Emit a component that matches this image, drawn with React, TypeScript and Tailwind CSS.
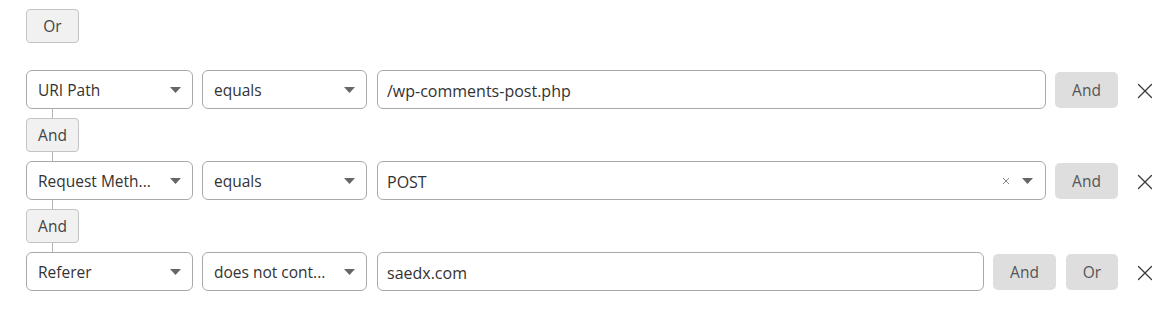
import React from "react";

const font = { fontFamily: '"Open Sans", "Noto Sans", sans-serif' };

function Caret() {
  return (
    <svg width="11" height="6" viewBox="0 0 11 6" className="shrink-0">
      <path d="M0 0 L11 0 L5.5 6 Z" fill="#666" />
    </svg>
  );
}

function XIcon() {
  return (
    <svg width="16" height="16" viewBox="0 0 16 16" className="shrink-0 mt-[2px]">
      <path d="M1.5 1.5 L14.5 14.5 M14.5 1.5 L1.5 14.5" stroke="#3a3a3a" strokeWidth="1.3" strokeLinecap="round" />
    </svg>
  );
}

function Select({ label, w }: { label: string; w: string }) {
  return (
    <div className={`${w} h-[39px] shrink-0 flex items-center justify-between pl-[11px] pr-[11px] border border-[#a9a9a9] rounded-[6px] bg-white text-[15.5px] text-[#333]`}>
      <span className="whitespace-nowrap pt-[2px]">{label}</span>
      <Caret />
    </div>
  );
}

function GrayBtn({ label, w }: { label: string; w: string }) {
  return (
    <div className={`${w} h-[36px] shrink-0 flex items-center justify-center rounded-[5px] bg-[#dedede] text-[15.5px] text-[#555]`}>
      <span className="pt-[2px]">{label}</span>
    </div>
  );
}

function Connector() {
  return (
    <div className="flex flex-col items-start">
      <div className="w-px h-[9px] bg-[#b5b5b5] ml-[26px]" />
      <div className="w-[53px] h-[34px] flex items-center justify-center rounded-[4px] border border-[#c4c4c4] bg-[#f1f1f1] text-[15.5px] text-[#444]">
        <span className="pt-[2px]">And</span>
      </div>
      <div className="w-px h-[9px] bg-[#b5b5b5] ml-[26px]" />
    </div>
  );
}

function Row({
  field,
  op,
  value,
  clear,
  orBtn,
}: {
  field: string;
  op: string;
  value: string;
  clear?: boolean;
  orBtn?: boolean;
}) {
  return (
    <div className="flex items-center h-[39px]">
      <Select label={field} w="w-[167px]" />
      <div className="w-[9px] shrink-0" />
      <Select label={op} w="w-[165px]" />
      <div className="w-[10px] shrink-0" />
      <div className="flex-1 h-[39px] flex items-center justify-between pl-[9px] pr-[12px] border border-[#a9a9a9] rounded-[6px] bg-white text-[16px] text-[#333]">
        <span className="whitespace-nowrap pt-[2px]">{value}</span>
        {clear && (
          <div className="flex items-center gap-[12px]">
            <svg width="8" height="8" viewBox="0 0 8 8">
              <path d="M1 1 L7 7 M7 1 L1 7" stroke="#888" strokeWidth="1" />
            </svg>
            <Caret />
          </div>
        )}
      </div>
      <div className="w-[9px] shrink-0" />
      <GrayBtn label="And" w="w-[63px]" />
      {orBtn && (
        <>
          <div className="w-[10px] shrink-0" />
          <GrayBtn label="Or" w="w-[52px]" />
        </>
      )}
      <div className="w-[19px] shrink-0" />
      <XIcon />
    </div>
  );
}

export default function App() {
  return (
    <div className="w-[1170px] h-[318px] bg-white pl-[26px] pr-[17px] pt-[9px]" style={font}>
      <div className="w-[53px] h-[34px] flex items-center justify-center rounded-[4px] border border-[#c4c4c4] bg-[#f1f1f1] text-[15.5px] text-[#444]">
        <span className="pt-[2px]">Or</span>
      </div>
      <div className="h-[27px]" />
      <Row field="URI Path" op="equals" value="/wp-comments-post.php" />
      <Connector />
      <Row field="Request Meth..." op="equals" value="POST" clear />
      <Connector />
      <Row field="Referer" op="does not cont..." value="saedx.com" orBtn />
    </div>
  );
}
